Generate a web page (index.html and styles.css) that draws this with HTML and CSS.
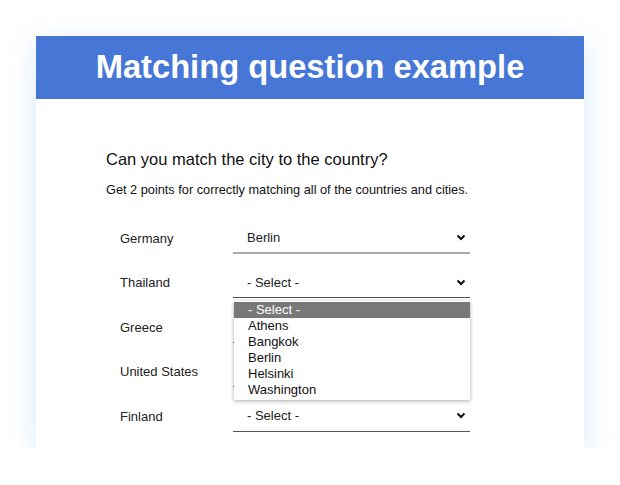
FILE: index.html
```html
<!DOCTYPE html>
<html lang="en">
<head>
<meta charset="utf-8">
<title>Matching question example</title>
<link rel="stylesheet" href="styles.css">
</head>
<body>
<div class="card">
  <div class="header"><h1 class="title">Matching question example</h1></div>
  <div class="content">
    <p class="question">Can you match the city to the country?</p>
    <p class="hint">Get 2 points for correctly matching all of the countries and cities.</p>
    <div class="rows">
      <div class="row">
        <span class="label">Germany</span>
        <div class="control filled"><span class="value">Berlin</span>
          <svg class="chev" width="10" height="7" viewBox="0 0 10 7"><polyline points="1.5,1.5 5,5 8.5,1.5" fill="none" stroke="#111" stroke-width="2"/></svg>
        </div>
      </div>
      <div class="row">
        <span class="label">Thailand</span>
        <div class="control"><span class="value">- Select -</span>
          <svg class="chev" width="10" height="7" viewBox="0 0 10 7"><polyline points="1.5,1.5 5,5 8.5,1.5" fill="none" stroke="#111" stroke-width="2"/></svg>
          <ul class="menu">
            <li class="opt active">- Select -</li>
            <li class="opt">Athens</li>
            <li class="opt">Bangkok</li>
            <li class="opt">Berlin</li>
            <li class="opt">Helsinki</li>
            <li class="opt">Washington</li>
          </ul>
        </div>
      </div>
      <div class="row">
        <span class="label">Greece</span>
        <div class="control"><span class="value"></span></div>
      </div>
      <div class="row">
        <span class="label">United States</span>
        <div class="control"><span class="value"></span></div>
      </div>
      <div class="row">
        <span class="label">Finland</span>
        <div class="control"><span class="value">- Select -</span>
          <svg class="chev" width="10" height="7" viewBox="0 0 10 7"><polyline points="1.5,1.5 5,5 8.5,1.5" fill="none" stroke="#111" stroke-width="2"/></svg>
        </div>
      </div>
    </div>
  </div>
</div>
</body>
</html>
```

FILE: styles.css
```css
html, body {
  margin: 0;
  padding: 0;
  background: #ffffff;
}
body {
  padding: 36px 0 0 36px;
  font-family: "Liberation Sans", Arial, sans-serif;
  color: #1a1a1a;
}
.card {
  width: 548px;
  height: 412px;
  background: #ffffff;
  box-shadow: 0 8px 28px rgba(170, 210, 245, 0.45);
  display: flex;
  flex-direction: column;
}
.header {
  height: 63px;
  background: #4677d6;
  display: flex;
  align-items: center;
  justify-content: center;
}
.title {
  margin: 0;
  color: #ffffff;
  font-size: 32.7px;
  font-weight: bold;
  line-height: 36px;
  position: relative;
  top: -1px;
}
.content {
  padding: 51px 0 0 70px;
}
.question {
  margin: 0;
  font-size: 16.5px;
  line-height: 19px;
  color: #111;
}
.hint {
  margin: 13px 0 0;
  font-size: 12.75px;
  line-height: 16px;
  color: #111;
}
.rows {
  margin-top: 25px;
  padding-left: 14px;
  display: flex;
  flex-direction: column;
  gap: 14px;
}
.row {
  display: flex;
  align-items: center;
  height: 30.5px;
}
.label {
  width: 113px;
  font-size: 13px;
  color: #222;
}
.control {
  position: relative;
  width: 237px;
  height: 100%;
  box-sizing: border-box;
  border-bottom: 1px solid #555;
  display: flex;
  align-items: center;
  padding: 0 4px 0 14px;
}
.control.filled {
  border-bottom: 2px solid #aaaaaa;
}
.value {
  flex: 1;
  font-size: 13px;
  color: #222;
}
.chev {
  display: block;
}
.menu {
  position: absolute;
  left: 1px;
  right: 0;
  top: calc(100% + 4px);
  margin: 0;
  padding: 1px 0 2px;
  list-style: none;
  background: #ffffff;
  box-shadow: 0 1px 4px rgba(0, 0, 0, 0.35);
  z-index: 2;
}
.opt {
  font-size: 13px;
  line-height: 16px;
  padding-left: 14px;
  color: #111;
}
.opt.active {
  background: #787878;
  color: #ffffff;
}
```
